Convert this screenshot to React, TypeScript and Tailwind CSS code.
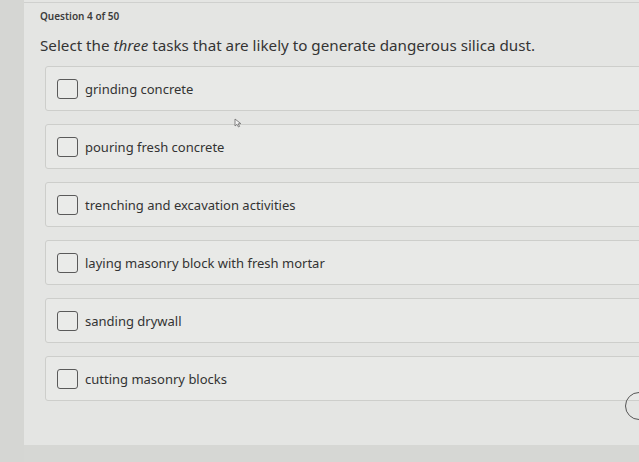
const options = [
  "grinding concrete",
  "pouring fresh concrete",
  "trenching and excavation activities",
  "laying masonry block with fresh mortar",
  "sanding drywall",
  "cutting masonry blocks",
];

export default function App() {
  return (
    <div
      className="relative flex h-[462px] w-[639px] overflow-hidden bg-[#e4e5e3] text-[#363636]"
      style={{ fontFamily: '"Noto Sans", "Open Sans", sans-serif' }}
    >
      {/* side rail */}
      <div className="w-[24px] shrink-0 bg-[#d5d6d3]" />

      <main className="flex flex-1 flex-col">
        <div className="h-[3px] border-b border-[#cfd0ce]" />
        <div className="flex flex-1 flex-col pl-[16px]">
          <p className="mt-[7px] text-[10px] font-semibold leading-[12px] text-[#3c3c3c]">
            Question 4 of 50
          </p>
          <h1 className="mt-[13px] text-[15.2px] leading-[20px] text-[#343434]">
            Select the <em>three</em> tasks that are likely to generate dangerous silica dust.
          </h1>

          <ul className="mt-[11px] -mr-[20px] ml-[5px] flex flex-col gap-[13px]">
            {options.map((label) => (
              <li
                key={label}
                className="flex h-[45px] items-center gap-[7px] rounded-[3px] border border-[#cdcecb] bg-[#e8e9e7] pl-[11px]"
              >
                <span className="h-[20px] w-[21px] shrink-0 rounded-[3px] border-[1.5px] border-[#5a5a5a] bg-[#eaebe9]" />
                <span className="text-[13px] leading-[16px] text-[#333333]">{label}</span>
              </li>
            ))}
          </ul>

          <div className="mt-auto h-[17px] -ml-[16px] bg-[#d6d7d4]" />
        </div>
      </main>

      {/* next button, partly off screen */}
      <span className="absolute left-[625px] top-[392px] h-[28px] w-[28px] rounded-full border-[1.5px] border-[#555555]" />

      {/* mouse pointer */}
      <svg className="absolute left-[234px] top-[118px]" width="8" height="10" viewBox="0 0 8 10">
        <path d="M1 1 L1 8 L3 6.3 L4.5 9 L5.6 8.4 L4.2 5.8 L6.8 5.6 Z" fill="#f4f4f4" stroke="#6a6a6a" strokeWidth="0.8" />
      </svg>
    </div>
  );
}
